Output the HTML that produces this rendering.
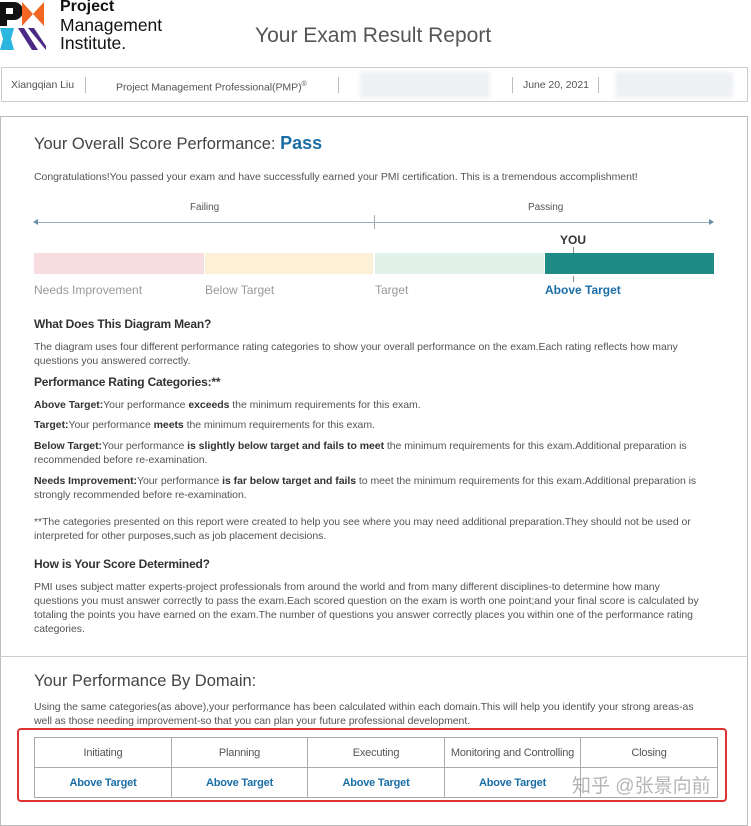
<!DOCTYPE html>
<html><head><meta charset="utf-8"><style>
*{margin:0;padding:0;box-sizing:border-box}
body{width:751px;height:814px;background:#fff;position:relative;overflow:hidden;font-family:"Liberation Sans",sans-serif;color:#444}
.a{position:absolute;white-space:nowrap}
.t{font-size:10.5px;line-height:14px;color:#555;letter-spacing:-0.05px}
.h{font-size:12px;font-weight:bold;color:#333;letter-spacing:-0.2px}
b{color:#333}
td{border:1px solid #aaa;overflow:hidden;white-space:nowrap}
</style></head><body>
<svg class="a" style="left:0;top:0" width="52" height="52" viewBox="0 0 52 52">
<path d="M0 2h14a9 9 0 0 1 0 18H7v6H0z" fill="#111"/><rect x="6" y="8" width="7" height="6" fill="#fff"/>
<path d="M22 2l11 12L44 2v24L33 14 22 26z" fill="#f26522"/>
<path d="M0 28h14l-3 11 3 11H0l3-11z" fill="#2bb6e0"/>
<path d="M18 28h6l14 22h-6zM28 28h6l12 18v4z" fill="#4b2a85"/>
</svg>
<div class="a" style="left:60px;top:-2px;font-size:16px;font-weight:bold;color:#111">Project</div>
<div class="a" style="left:60px;top:15px;font-size:17.5px;color:#111">Management</div>
<div class="a" style="left:60px;top:33px;font-size:17.5px;color:#111">Institute.</div>
<div class="a" style="left:255px;top:24px;font-size:21px;color:#555">Your Exam Result Report</div>
<div class="a" style="left:1px;top:67px;width:747px;height:35px;border:1px solid #ccc"></div>
<div class="a t" style="left:11px;top:78px">Xiangqian Liu</div>
<div class="a" style="left:85px;top:77px;width:1px;height:16px;background:#bbb"></div>
<div class="a t" style="left:116px;top:78px">Project Management Professional(PMP)<sup style="font-size:7px">®</sup></div>
<div class="a" style="left:338px;top:77px;width:1px;height:16px;background:#bbb"></div>
<div class="a" style="left:360px;top:72px;width:130px;height:26px;background:#eef0f3;filter:blur(2px)"></div>
<div class="a" style="left:512px;top:77px;width:1px;height:16px;background:#bbb"></div>
<div class="a t" style="left:523px;top:78px">June 20, 2021</div>
<div class="a" style="left:598px;top:77px;width:1px;height:16px;background:#bbb"></div>
<div class="a" style="left:615px;top:72px;width:118px;height:26px;background:#eef0f3;filter:blur(2px)"></div>
<div class="a" style="left:0;top:116px;width:748px;height:710px;border:1px solid #bbb"></div>
<div class="a" style="left:0;top:656px;width:748px;height:1px;background:#ccc"></div>
<div class="a" style="left:34px;top:133px;font-size:16.5px;color:#444">Your Overall Score Performance: <span style="color:#1a6ea6;font-weight:bold;font-size:18px">Pass</span></div>
<div class="a t" style="left:34px;top:170px">Congratulations!You passed your exam and have successfully earned your PMI certification. This is a tremendous accomplishment!</div>
<div class="a t" style="left:190px;top:201px;font-size:10px">Failing</div>
<div class="a t" style="left:528px;top:201px;font-size:10px">Passing</div>
<div class="a" style="left:36px;top:222px;width:676px;height:1px;background:#9ab"></div>
<div class="a" style="left:33px;top:219px;width:0;height:0;border:3px solid transparent;border-right:5px solid #6a8fa8;border-left:0"></div>
<div class="a" style="left:709px;top:219px;width:0;height:0;border:3px solid transparent;border-left:5px solid #6a8fa8;border-right:0"></div>
<div class="a" style="left:374px;top:215px;width:1px;height:14px;background:#aaa"></div>
<div class="a" style="left:560px;top:233px;font-size:12px;font-weight:bold;color:#333">YOU</div>
<div class="a" style="left:573px;top:247px;width:1px;height:6px;background:#888"></div>
<div class="a" style="left:34px;top:253px;width:170px;height:21px;background:#f8dde0"></div>
<div class="a" style="left:205px;top:253px;width:168px;height:21px;background:#fcf1d6"></div>
<div class="a" style="left:375px;top:253px;width:169px;height:21px;background:#e2f1ea"></div>
<div class="a" style="left:545px;top:253px;width:169px;height:21px;background:#1e8b86"></div>
<div class="a" style="left:573px;top:276px;width:1px;height:6px;background:#888"></div>
<div class="a" style="left:34px;top:283px;font-size:12px;color:#999">Needs Improvement</div>
<div class="a" style="left:205px;top:283px;font-size:12px;color:#999">Below Target</div>
<div class="a" style="left:375px;top:283px;font-size:12px;color:#999">Target</div>
<div class="a" style="left:545px;top:283px;font-size:12px;color:#1a6ea6;font-weight:bold">Above Target</div>

<div class="a h" style="left:34px;top:317px">What Does This Diagram Mean?</div>
<div class="a t" style="left:34px;top:340px">The diagram uses four different performance rating categories to show your overall performance on the exam.Each rating reflects how many<br>questions you answered correctly.</div>
<div class="a h" style="left:34px;top:375px">Performance Rating Categories:**</div>
<div class="a t" style="left:34px;top:398px"><b>Above Target:</b>Your performance <b>exceeds</b> the minimum requirements for this exam.</div>
<div class="a t" style="left:34px;top:418px"><b>Target:</b>Your performance <b>meets</b> the minimum requirements for this exam.</div>
<div class="a t" style="left:34px;top:439px"><b>Below Target:</b>Your performance <b>is slightly below target and fails to meet</b> the minimum requirements for this exam.Additional preparation is<br>recommended before re-examination.</div>
<div class="a t" style="left:34px;top:474px"><b>Needs Improvement:</b>Your performance <b>is far below target and fails</b> to meet the minimum requirements for this exam.Additional preparation is<br>strongly recommended before re-examination.</div>
<div class="a t" style="left:34px;top:515px">**The categories presented on this report were created to help you see where you may need additional preparation.They should not be used or<br>interpreted for other purposes,such as job placement decisions.</div>
<div class="a h" style="left:34px;top:557px">How is Your Score Determined?</div>
<div class="a t" style="left:34px;top:580px">PMI uses subject matter experts-project professionals from around the world and from many different disciplines-to determine how many<br>questions you must answer correctly to pass the exam.Each scored question on the exam is worth one point;and your final score is calculated by<br>totaling the points you have earned on the exam.The number of questions you answer correctly places you within one of the performance rating<br>categories.</div>

<div class="a" style="left:34px;top:672px;font-size:16.5px;color:#444">Your Performance By Domain:</div>
<div class="a t" style="left:34px;top:700px">Using the same categories(as above),your performance has been calculated within each domain.This will help you identify your strong areas-as<br>well as those needing improvement-so that you can plan your future professional development.</div>
<table class="a" style="left:34px;top:737px;width:683px;height:60px;border-collapse:collapse;table-layout:fixed;font-size:11px;text-align:center;letter-spacing:-0.2px">
<colgroup><col style="width:137px"><col style="width:136px"><col style="width:137px"><col style="width:136px"><col style="width:137px"></colgroup>
<tr style="height:30px;color:#555"><td>Initiating</td><td>Planning</td><td>Executing</td><td>Monitoring and Controlling</td><td>Closing</td></tr>
<tr style="height:30px;color:#1a6ea6;font-weight:bold"><td>Above Target</td><td>Above Target</td><td>Above Target</td><td>Above Target</td><td></td></tr>
</table>
<div class="a" style="left:17px;top:728px;width:710px;height:74px;border:2.5px solid #d33;border-radius:4px"></div>
<div class="a" style="left:572px;top:771px;font-family:'Liberation Sans','Noto Sans CJK SC',sans-serif;font-size:19px;color:rgba(120,120,120,0.55)">知乎 @张景向前</div>
</body></html>
